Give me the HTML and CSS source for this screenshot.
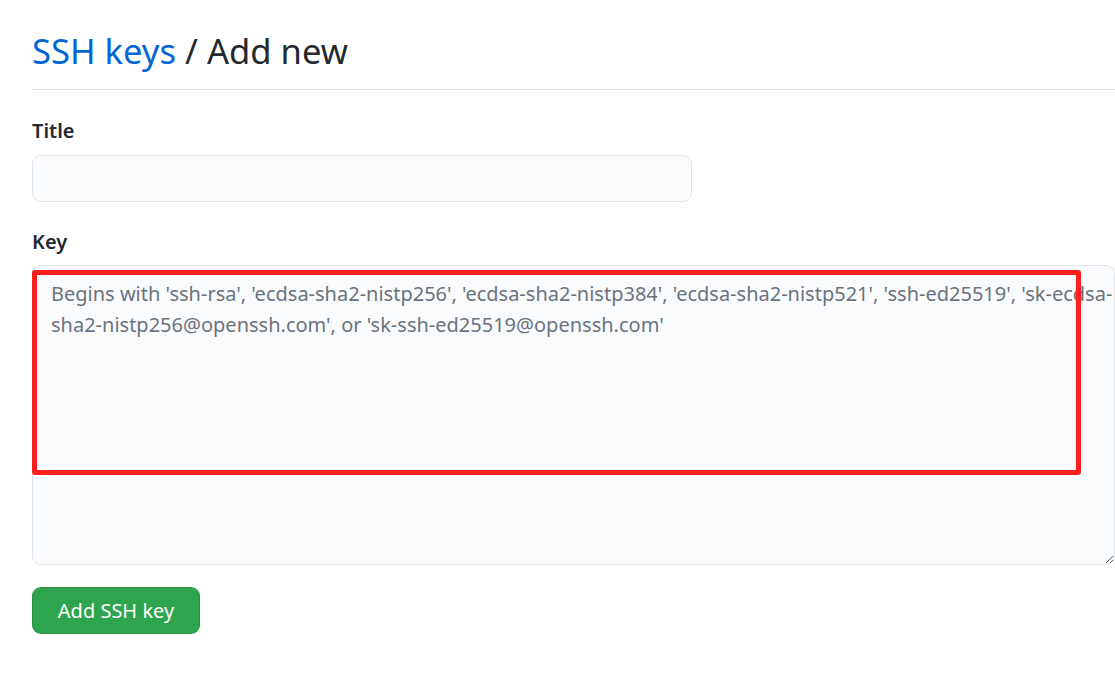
FILE: index.html
```html
<!DOCTYPE html>
<html lang="en">
<head>
<meta charset="utf-8">
<title>SSH keys / Add new</title>
<link rel="stylesheet" href="styles.css">
</head>
<body>
<main class="page">
  <div class="subhead">
    <h2 class="subhead-heading"><a class="crumb" href="#">SSH keys</a> / Add new</h2>
  </div>
  <form class="key-form">
    <div class="form-group">
      <label class="form-label" for="title">Title</label>
      <input class="form-control input-title" id="title" type="text">
    </div>
    <div class="form-group key-group">
      <label class="form-label" for="key">Key</label>
      <div class="key-wrap">
        <textarea class="form-control input-key" id="key" placeholder="Begins with 'ssh-rsa', 'ecdsa-sha2-nistp256', 'ecdsa-sha2-nistp384', 'ecdsa-sha2-nistp521', 'ssh-ed25519', 'sk-ecdsa-&#10;sha2-nistp256@openssh.com', or 'sk-ssh-ed25519@openssh.com'"></textarea>
        <div class="annotation"></div>
      </div>
    </div>
    <button class="btn-primary" type="button">Add SSH key</button>
  </form>
</main>
</body>
</html>
```
FILE: styles.css
```css
html, body {
  margin: 0;
  padding: 0;
  background: #ffffff;
  overflow: hidden;
}

body {
  font-family: "Noto Sans", "Open Sans", sans-serif;
  color: #24292e;
}

.page {
  padding: 27px 0 0 32px;
  width: 1083px;
}

.subhead {
  border-bottom: 1px solid #e1e4e8;
  padding-bottom: 14px;
}

.subhead-heading {
  margin: 0;
  font-size: 34.6px;
  font-weight: 400;
  line-height: 48px;
  color: #24292e;
}

.crumb {
  color: #0366d6;
  text-decoration: none;
}

.key-form {
  padding-top: 26px;
}

.form-group {
  display: flex;
  flex-direction: column;
  align-items: flex-start;
  gap: 9px;
}

.key-group {
  margin-top: 25px;
  gap: 8px;
}

.form-label {
  font-size: 20px;
  font-weight: 600;
  line-height: 30px;
  color: #24292e;
}

.form-control {
  box-sizing: border-box;
  border: 1px solid #e1e4e8;
  border-radius: 9px;
  background: #fafbfc;
  font-family: inherit;
  font-size: 20px;
  color: #24292e;
  outline: none;
}

.input-title {
  width: 660px;
  height: 47px;
  padding: 0 18px;
}

.key-wrap {
  position: relative;
  width: 1083px;
}

.input-key {
  display: block;
  width: 1083px;
  height: 300px;
  padding: 12px 0 12px 18px;
  line-height: 31px;
  resize: vertical;
}

.input-key::placeholder {
  color: #6a737d;
  opacity: 1;
}

.annotation {
  position: absolute;
  left: 0;
  top: 5px;
  width: 1049px;
  height: 205px;
  box-sizing: border-box;
  border: 5px solid #ff1d1d;
  border-radius: 3px;
  pointer-events: none;
}

.btn-primary {
  margin-top: 22px;
  box-sizing: border-box;
  width: 168px;
  height: 47px;
  padding: 0;
  border: 1px solid rgba(27, 31, 35, 0.15);
  border-radius: 9px;
  background: #2ea44f;
  color: #ffffff;
  font-family: inherit;
  font-size: 20px;
  font-weight: 400;
  line-height: 45px;
  cursor: pointer;
}
```
